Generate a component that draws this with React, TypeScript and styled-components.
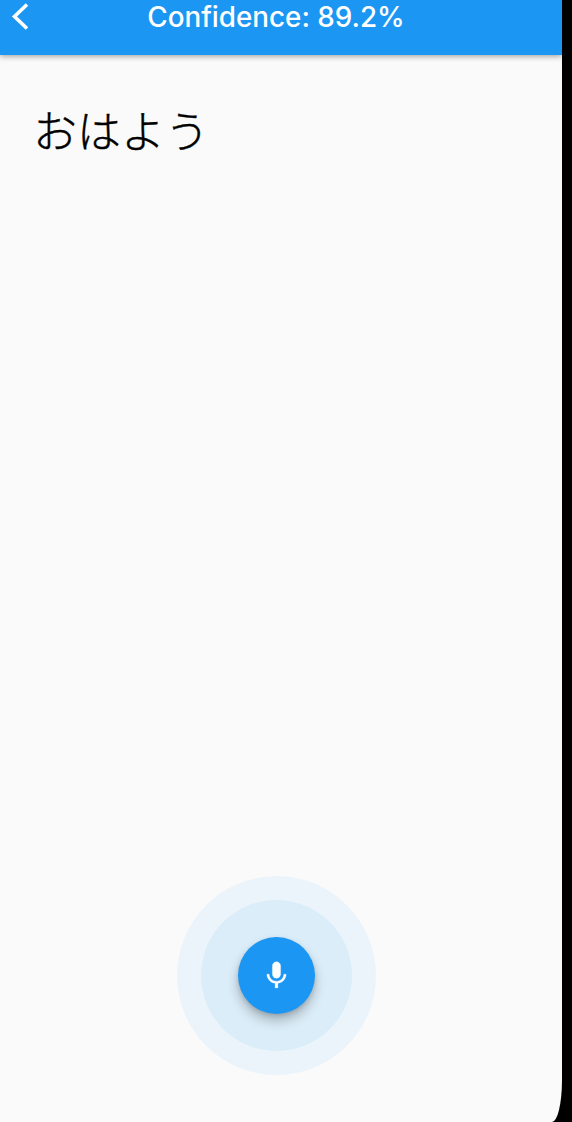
import styled, { createGlobalStyle } from 'styled-components';

const GlobalStyle = createGlobalStyle`
  html, body {
    margin: 0;
    padding: 0;
    height: 100%;
    background: #000;
    overflow: hidden;
  }
`;

const Screen = styled.div`
  display: flex;
  flex-direction: column;
  box-sizing: border-box;
  width: 562px;
  height: 1122px;
  background: #fafafa;
  border-bottom-right-radius: 10px 42px;
  overflow: hidden;
`;

const Header = styled.header`
  display: flex;
  align-items: flex-start;
  justify-content: center;
  flex-shrink: 0;
  position: relative;
  box-sizing: border-box;
  height: 55px;
  padding-right: 10px;
  background: #1c96f3;
  box-shadow: 0 1px 6px rgb(0 0 0 / 40%);
`;

const BackButton = styled.button`
  position: absolute;
  top: 0;
  left: 10px;
  display: flex;
  padding: 0;
  border: 0;
  background: none;
`;

const HeaderTitle = styled.h1`
  margin: 0;
  font-family: Inter, Roboto, "Liberation Sans", sans-serif;
  font-size: 27.8px;
  font-weight: 500;
  line-height: 34px;
  color: #fff;
`;

const Content = styled.main`
  flex: 1;
  padding: 48px 33px 0;
`;

const Transcript = styled.p`
  margin: 0;
  font-family: "Noto Sans CJK JP", sans-serif;
  font-size: 44px;
  font-weight: 300;
  line-height: 52px;
  color: #000;
  -webkit-text-stroke: 0.4px #000;
`;

const MicArea = styled.div`
  display: flex;
  justify-content: center;
  padding: 0 9px 47px 0;
`;

const Ring = styled.div<{ size: number; color: string }>`
  display: flex;
  align-items: center;
  justify-content: center;
  width: ${(props) => props.size}px;
  height: ${(props) => props.size}px;
  border-radius: 50%;
  background: ${(props) => props.color};
`;

const MicButton = styled.button`
  display: flex;
  align-items: center;
  justify-content: center;
  width: 77px;
  height: 77px;
  padding: 0;
  border: 0;
  border-radius: 50%;
  background: #1c96f3;
  box-shadow: 0 7px 12px rgb(0 0 0 / 24%), 0 2px 4px rgb(0 0 0 / 12%);
`;

const BackIcon = () => (
  <svg width="24" height="34" viewBox="0 0 24 34" fill="none">
    <path d="M17 4.5 4.5 16.5 17 28.5" stroke="#fff" strokeWidth="3.6" />
  </svg>
);

const MicIcon = () => (
  <svg width="33" height="33" viewBox="0 0 24 24" fill="#fff" stroke="#fff" strokeWidth="0.2">
    <path d="M12 14c1.66 0 2.99-1.34 2.99-3L15 5c0-1.66-1.34-3-3-3S9 3.34 9 5v6c0 1.66 1.34 3 3 3zm5.3-3c0 3-2.54 5.1-5.3 5.1S6.7 14 6.7 11H5c0 3.41 2.72 6.23 6 6.72V21h2v-3.28c3.28-.48 6-3.3 6-6.72h-1.7z" />
  </svg>
);

export default function App() {
  return (
    <>
      <GlobalStyle />
      <Screen>
        <Header>
          <BackButton aria-label="Back">
            <BackIcon />
          </BackButton>
          <HeaderTitle>Confidence: 89.2%</HeaderTitle>
        </Header>
        <Content>
          <Transcript>おはよう</Transcript>
        </Content>
        <MicArea>
          <Ring size={199} color="#ebf4fb">
            <Ring size={151} color="#dbedf9">
              <MicButton aria-label="Listen">
                <MicIcon />
              </MicButton>
            </Ring>
          </Ring>
        </MicArea>
      </Screen>
    </>
  );
}
